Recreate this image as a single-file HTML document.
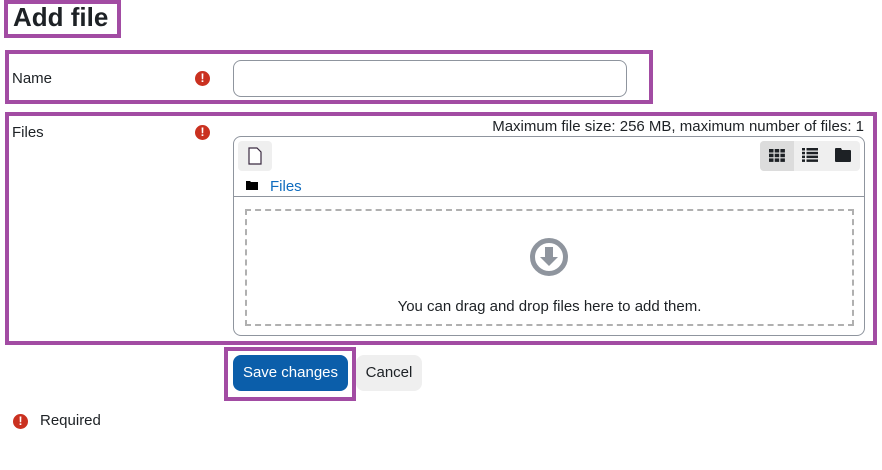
<!DOCTYPE html>
<html><head><style>
*{box-sizing:border-box;margin:0;padding:0}
body{width:882px;height:470px;background:#fff;font-family:"Liberation Sans",sans-serif;color:#1d2125;position:relative;overflow:hidden;font-size:15px}
.a{position:absolute}
.pb{position:absolute;border:4px solid #a24ca3}
.req{position:absolute;width:15px;height:15px;border-radius:50%;background:#ca3120;color:#fff;font-weight:bold;font-size:12px;text-align:center;line-height:15px}
</style></head><body>
<div class="pb" style="left:4px;top:0;width:117px;height:38px"></div>
<div class="a" style="left:13px;top:2px;font-size:26px;font-weight:bold;line-height:30px">Add file</div>

<div class="pb" style="left:5px;top:50px;width:648px;height:54px"></div>
<div class="a" style="left:12px;top:70px">Name</div>
<div class="req" style="left:195px;top:71px">!</div>
<div class="a" style="left:233px;top:60px;width:394px;height:37px;border:1px solid #8f959e;border-radius:8px"></div>

<div class="pb" style="left:5px;top:112px;width:872px;height:233px"></div>
<div class="a" style="left:12px;top:124px">Files</div>
<div class="req" style="left:195px;top:125px">!</div>
<div class="a" style="right:18px;top:118px;color:#1d2125">Maximum file size: 256 MB, maximum number of files: 1</div>

<div class="a" style="left:233px;top:136px;width:632px;height:200px;border:1px solid #8f959e;border-radius:8px"></div>
<div class="a" style="left:234px;top:196px;width:630px;height:1px;background:#8f959e"></div>
<div class="a" style="left:238px;top:141px;width:34px;height:30px;background:#efefef;border-radius:4px"></div>
<svg class="a" style="left:248px;top:147px" width="14" height="18" viewBox="0 0 14 18"><path d="M1 1H9L13 5V17H1Z" fill="#fff" stroke="#3a2a40" stroke-width="1.2"/></svg>
<svg class="a" style="left:246px;top:180px" width="12" height="10" viewBox="0 0 12 10"><path d="M0 1H4L5 2H12V10H0Z" fill="#000"/></svg>
<div class="a" style="left:270px;top:178px;color:#0f6cbf">Files</div>

<div class="a" style="left:760px;top:141px;width:100px;height:30px;background:#efefef;border-radius:4px"></div>
<div class="a" style="left:760px;top:141px;width:34px;height:30px;background:#dcdcdc;border-radius:4px 0 0 4px"></div>
<svg class="a" style="left:769px;top:149px" width="16" height="13" viewBox="0 0 16 13"><g fill="#1d2125"><rect x="0" y="0" width="4.5" height="3.5"/><rect x="5.7" y="0" width="4.5" height="3.5"/><rect x="11.4" y="0" width="4.5" height="3.5"/><rect x="0" y="4.7" width="4.5" height="3.5"/><rect x="5.7" y="4.7" width="4.5" height="3.5"/><rect x="11.4" y="4.7" width="4.5" height="3.5"/><rect x="0" y="9.4" width="4.5" height="3.5"/><rect x="5.7" y="9.4" width="4.5" height="3.5"/><rect x="11.4" y="9.4" width="4.5" height="3.5"/></g></svg>
<svg class="a" style="left:802px;top:148px" width="16" height="14" viewBox="0 0 16 14"><g fill="#1d2125"><rect x="0" y="0" width="3" height="2.5"/><rect x="4.5" y="0" width="11.5" height="2.5"/><rect x="0" y="3.8" width="3" height="2.5"/><rect x="4.5" y="3.8" width="11.5" height="2.5"/><rect x="0" y="7.6" width="3" height="2.5"/><rect x="4.5" y="7.6" width="11.5" height="2.5"/><rect x="0" y="11.4" width="3" height="2.5"/><rect x="4.5" y="11.4" width="11.5" height="2.5"/></g></svg>
<svg class="a" style="left:835px;top:148px" width="16" height="14" viewBox="0 0 16 14"><path d="M0 1Q0 0 1 0H6L7 2H15Q16 2 16 3V13Q16 14 15 14H1Q0 14 0 13Z" fill="#1d2125"/></svg>

<div class="a" style="left:245px;top:209px;width:609px;height:117px;border:2px dashed #b0b0b0"></div>
<svg class="a" style="left:529px;top:237px" width="40" height="40" viewBox="0 0 40 40"><circle cx="20" cy="20" r="16.5" fill="none" stroke="#8f959e" stroke-width="5"/><path d="M16 10H24V20H29L20 29L11 20H16Z" fill="#8f959e"/></svg>
<div class="a" style="left:245px;top:298px;width:609px;text-align:center">You can drag and drop files here to add them.</div>

<div class="pb" style="left:224px;top:347px;width:132px;height:54px"></div>
<div class="a" style="left:233px;top:355px;width:115px;height:36px;background:#0b5eaa;border-radius:8px;color:#fff;text-align:center;line-height:36px">Save changes</div>
<div class="a" style="left:356px;top:355px;width:66px;height:36px;background:#efefef;border-radius:8px;text-align:center;line-height:36px">Cancel</div>

<div class="req" style="left:13px;top:414px">!</div>
<div class="a" style="left:40px;top:412px">Required</div>
</body></html>
